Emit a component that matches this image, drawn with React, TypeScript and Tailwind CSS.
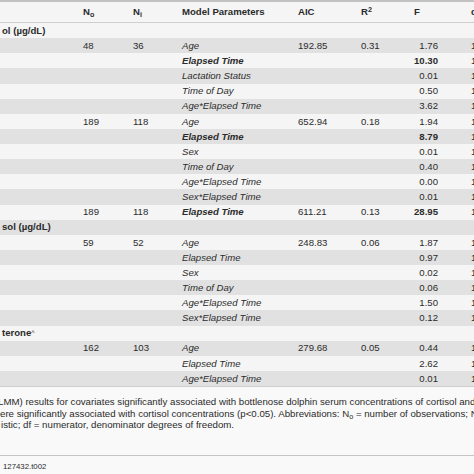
import React from "react";

type Row = {
  label?: React.ReactNode;
  no?: string;
  ni?: string;
  param?: string;
  strong?: boolean;
  aic?: string;
  r2?: string;
  f?: string;
  section?: boolean;
};

const rows: Row[] = [
  { section: true, label: "ol (µg/dL)" },
  { no: "48", ni: "36", param: "Age", aic: "192.85", r2: "0.31", f: "1.76" },
  { param: "Elapsed Time", strong: true, f: "10.30" },
  { param: "Lactation Status", f: "0.01" },
  { param: "Time of Day", f: "0.50" },
  { param: "Age*Elapsed Time", f: "3.62" },
  { no: "189", ni: "118", param: "Age", aic: "652.94", r2: "0.18", f: "1.94" },
  { param: "Elapsed Time", strong: true, f: "8.79" },
  { param: "Sex", f: "0.01" },
  { param: "Time of Day", f: "0.40" },
  { param: "Age*Elapsed Time", f: "0.00" },
  { param: "Sex*Elapsed Time", f: "0.01" },
  { no: "189", ni: "118", param: "Elapsed Time", strong: true, aic: "611.21", r2: "0.13", f: "28.95" },
  { section: true, label: "sol (µg/dL)" },
  { no: "59", ni: "52", param: "Age", aic: "248.83", r2: "0.06", f: "1.87" },
  { param: "Elapsed Time", f: "0.97" },
  { param: "Sex", f: "0.02" },
  { param: "Time of Day", f: "0.06" },
  { param: "Age*Elapsed Time", f: "1.50" },
  { param: "Sex*Elapsed Time", f: "0.12" },
  {
    section: true,
    label: (
      <>
        terone<sup className="text-[7px] font-normal relative -top-[1px]">^</sup>
      </>
    ),
  },
  { no: "162", ni: "103", param: "Age", aic: "279.68", r2: "0.05", f: "0.44" },
  { param: "Elapsed Time", f: "2.62" },
  { param: "Age*Elapsed Time", f: "0.01" },
];

const cols = "grid grid-cols-[83px_50px_49px_116px_63px_39px_38px_33px_1fr]";

export default function App() {
  return (
    <div className="w-[474px] h-[474px] overflow-hidden bg-[#f9f9f9] text-[#2b2b2b] text-[9.6px] leading-none font-['Liberation_Sans',Arial,sans-serif]">
      {/* header */}
      <div className={`${cols} items-center h-[23px] bg-[#f5f5f5] border-t-[2px] border-b border-t-[#c2c2c2] border-b-[#cfcfcf] font-bold whitespace-nowrap`}>
        <div></div>
        <div>
          N<sub>o</sub>
        </div>
        <div>
          N<sub>i</sub>
        </div>
        <div>Model Parameters</div>
        <div>AIC</div>
        <div>
          R<sup>2</sup>
        </div>
        <div className="pl-[14px]">F</div>
        <div></div>
        <div>df</div>
      </div>
      {/* body */}
      <div className="border-b border-[#cfcfcf]">
        {rows.map((r, i) => (
          <div
            key={i}
            className={`${cols} items-center h-[15.13px] whitespace-nowrap ${
              i % 2 === 0 ? "bg-[#f5f5f5]" : "bg-[#e1e1e1]"
            }`}
          >
            {r.section ? (
              <div className="col-span-9 font-bold pl-[2px]">{r.label}</div>
            ) : (
              <>
                <div></div>
                <div>{r.no}</div>
                <div>{r.ni}</div>
                <div className={r.strong ? "italic font-bold" : "italic"}>{r.param}</div>
                <div>{r.aic}</div>
                <div>{r.r2}</div>
                <div className={`text-right ${r.strong ? "font-bold" : ""}`}>{r.f}</div>
                <div></div>
                <div>1, 34</div>
              </>
            )}
          </div>
        ))}
      </div>
      {/* caption */}
      <div className="pt-[9px] flex flex-col text-[9.68px] leading-[11.7px] whitespace-nowrap">
        <div className="-ml-[2px]">
          LMM) results for covariates significantly associated with bottlenose dolphin serum concentrations of cortisol and
        </div>
        <div>
          ere significantly associated with cortisol concentrations (p&lt;0.05). Abbreviations: N<sub>o</sub> = number of observations; N
        </div>
        <div className="pl-[1px]">istic; df = numerator, denominator degrees of freedom.</div>
      </div>
      <div className="mt-[24px] h-px bg-[#c4c4c4]"></div>
      <div className="pt-[7px] pl-[3px] text-[7.8px]">127432.t002</div>
    </div>
  );
}
